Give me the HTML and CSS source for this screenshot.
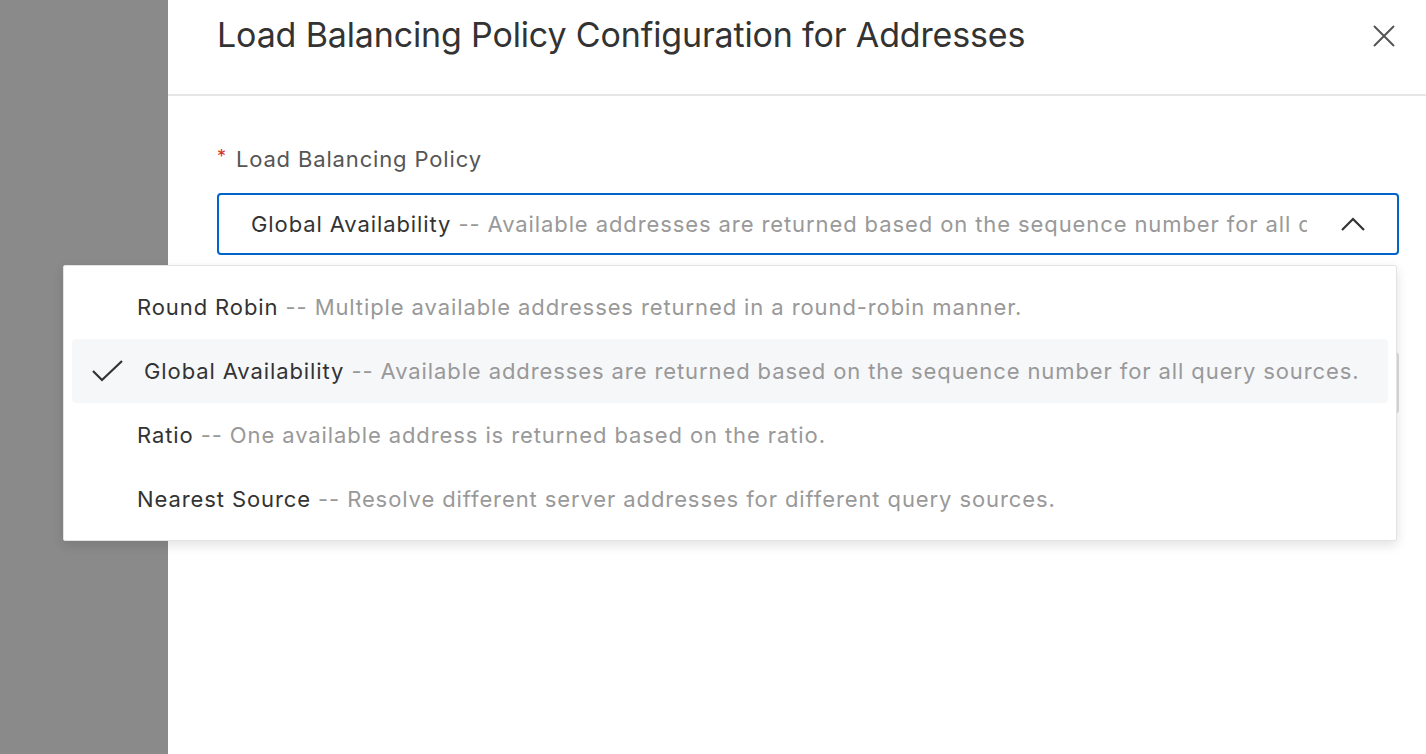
FILE: index.html
```html
<!DOCTYPE html>
<html lang="en">

<head>
    <meta charset="UTF-8">
    <meta name="viewport" content="width=device-width, initial-scale=1.0">
    <title>Load Balancing Policy Configuration</title>
    <link rel="stylesheet" href="styles.css">
</head>

<body>
    <div class="mask"></div>

    <div class="drawer">
        <div class="drawerHeader">
            <h1 class="drawerTitle">Load Balancing Policy Configuration for Addresses</h1>
            <button class="closeButton" aria-label="Close">
                <svg width="22" height="22" viewBox="0 0 22 22">
                    <path d="M1 1 L21 21 M21 1 L1 21" stroke="#555" stroke-width="2" fill="none" />
                </svg>
            </button>
        </div>

        <div class="drawerBody">
            <div class="formItem">
                <label class="formLabel"><span class="required">*</span>Load Balancing Policy</label>
                <div class="selectBox">
                    <span class="selectValue">Global Availability <span class="hint">-- Available addresses are returned based on the sequence number for all query sources.</span></span>
                    <svg class="arrow" width="24" height="14" viewBox="0 0 24 14">
                        <path d="M1 13 L12 2 L23 13" stroke="#333" stroke-width="2.2" fill="none" />
                    </svg>
                </div>
            </div>

            <div class="formItem">
                <div class="plainBox"></div>
            </div>

            <ul class="menu">
                <li class="menuItem"><span>Round Robin <span class="hint">-- Multiple available addresses returned in a round-robin manner.</span></span></li>
                <li class="menuItem selected">
                    <svg class="check" width="32" height="24" viewBox="0 0 32 24">
                        <path d="M1 12 L10 21 L30 2" stroke="#333" stroke-width="2.2" fill="none" />
                    </svg>
                    <span>Global Availability <span class="hint">-- Available addresses are returned based on the sequence number for all query sources.</span></span>
                </li>
                <li class="menuItem"><span>Ratio <span class="hint">-- One available address is returned based on the ratio.</span></span></li>
                <li class="menuItem"><span>Nearest Source <span class="hint">-- Resolve different server addresses for different query sources.</span></span></li>
            </ul>
        </div>
    </div>
</body>

</html>
```

FILE: styles.css
```css
* {
    box-sizing: border-box;
}

body {
    margin: 0;
    display: flex;
    height: 754px;
    overflow: hidden;
    font-family: Inter, "Liberation Sans", Arial, sans-serif;
    color: #333;
}

.mask {
    width: 168px;
    flex-shrink: 0;
    background-color: #8a8a8a;
}

.drawer {
    flex: 1;
    min-width: 0;
    background-color: #fff;
    position: relative;
}

.drawerHeader {
    height: 96px;
    border-bottom: 2px solid #e6e6e6;
    display: flex;
    align-items: flex-start;
    justify-content: space-between;
    padding: 0 31px 0 49px;
}

.drawerTitle {
    margin: 0;
    padding-top: 15px;
    font-size: 34px;
    line-height: 40px;
    letter-spacing: -0.15px;
    font-weight: normal;
    color: #333;
}

.closeButton {
    margin-top: 25px;
    border: none;
    background: none;
    padding: 0;
    width: 22px;
    height: 22px;
}

.drawerBody {
    padding: 47px 27px 0 49px;
}

.formItem {
    margin-bottom: 97px;
}

.formLabel {
    display: block;
    font-size: 22px;
    line-height: 32px;
    letter-spacing: 0.85px;
    color: #555;
    margin-bottom: 16px;
}

.required {
    color: #d93026;
    font-size: 18px;
    margin-right: 9px;
    position: relative;
    top: -4px;
}

.selectBox {
    height: 62px;
    border: 2px solid #0064c8;
    border-radius: 4px;
    display: flex;
    align-items: center;
    padding: 0 32px 0 32px;
    gap: 34px;
}

.selectValue {
    flex: 1;
    min-width: 0;
    font-size: 22px;
    letter-spacing: 0.9px;
    white-space: nowrap;
    overflow: hidden;
}

.hint {
    color: #999;
}

.plainBox {
    height: 62px;
    border: 2px solid #ddd;
    border-radius: 4px;
}

.menu {
    position: absolute;
    left: -105px;
    top: 265px;
    width: 1334px;
    margin: 0;
    padding: 9px 8px;
    list-style: none;
    background-color: #fff;
    border: 1px solid #e3e3e3;
    border-radius: 2px;
    box-shadow: 0 4px 12px rgba(0, 0, 0, 0.12);
}

.menuItem {
    height: 64px;
    display: flex;
    align-items: center;
    padding-left: 65px;
    font-size: 22px;
    letter-spacing: 0.9px;
    white-space: nowrap;
}

.menuItem.selected {
    background-color: #f6f7f9;
    border-radius: 4px;
    padding-left: 20px;
}

.check {
    margin-right: 20px;
}
```
